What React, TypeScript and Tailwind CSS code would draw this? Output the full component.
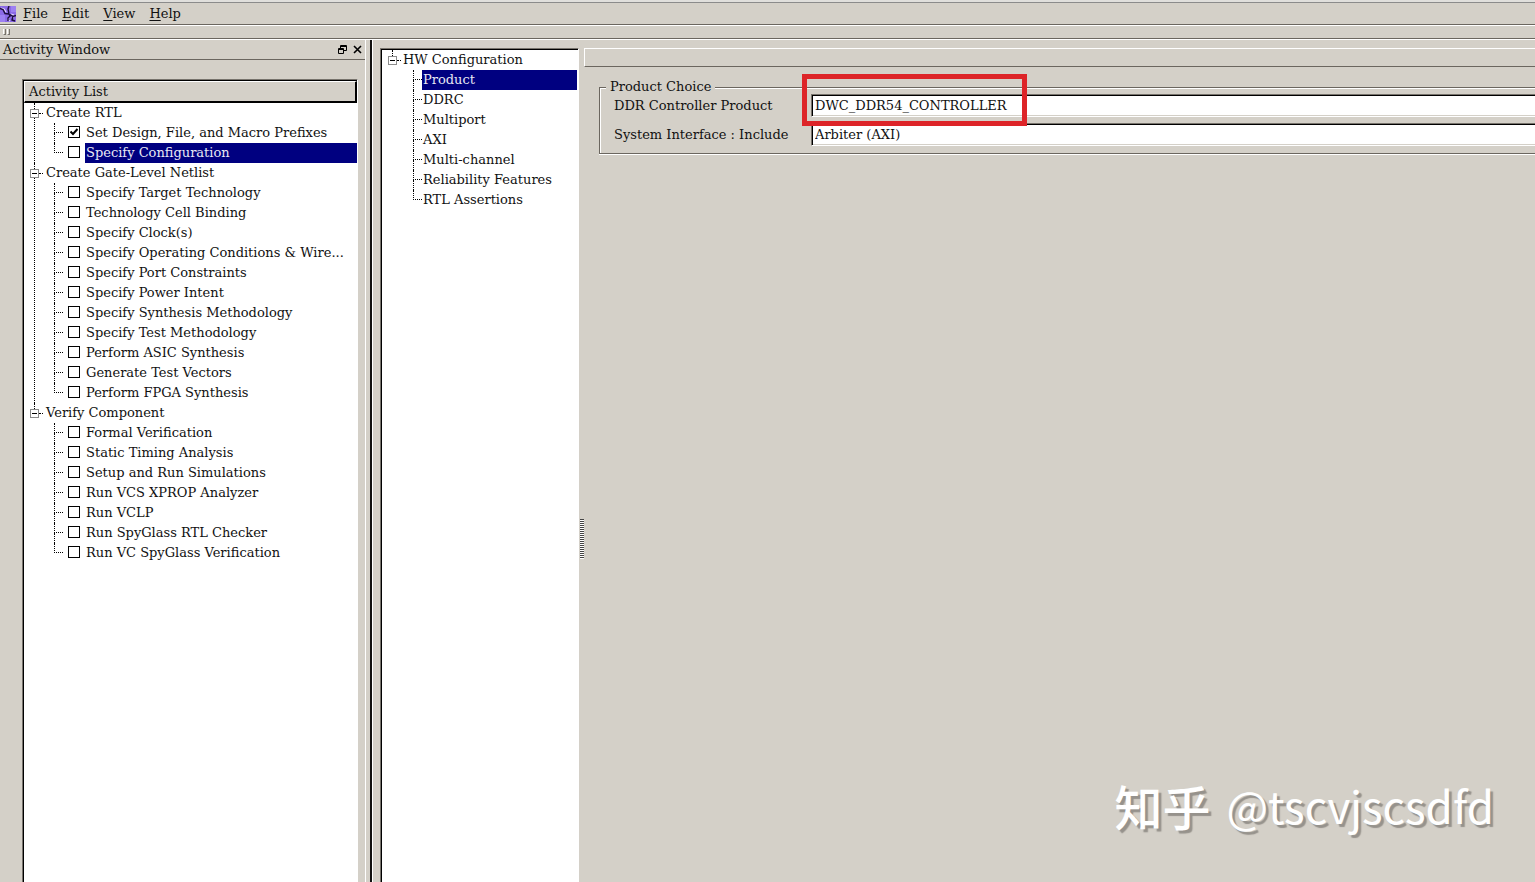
import { useId, useState } from "react";

type Group = { name: string; items: string[] };

const activityGroups: Group[] = [
  { name: "Create RTL", items: ["Set Design, File, and Macro Prefixes", "Specify Configuration"] },
  {
    name: "Create Gate-Level Netlist",
    items: [
      "Specify Target Technology",
      "Technology Cell Binding",
      "Specify Clock(s)",
      "Specify Operating Conditions & Wire...",
      "Specify Port Constraints",
      "Specify Power Intent",
      "Specify Synthesis Methodology",
      "Specify Test Methodology",
      "Perform ASIC Synthesis",
      "Generate Test Vectors",
      "Perform FPGA Synthesis",
    ],
  },
  {
    name: "Verify Component",
    items: [
      "Formal Verification",
      "Static Timing Analysis",
      "Setup and Run Simulations",
      "Run VCS XPROP Analyzer",
      "Run VCLP",
      "Run SpyGlass RTL Checker",
      "Run VC SpyGlass Verification",
    ],
  },
];

const configPages = [
  "Product",
  "DDRC",
  "Multiport",
  "AXI",
  "Multi-channel",
  "Reliability Features",
  "RTL Assertions",
];

function AppLogo() {
  return (
    <svg className="h-4 w-4 shrink-0" viewBox="0 0 16 16" aria-hidden="true">
      <rect width="16" height="16" fill="#8b6ae6" />
      <path d="M0 9h5v7H0zM11 0h5v6h-5z" fill="#9d80f2" />
      <path d="M1 2l3 1 2 3M11 8l3 1M9 11l-1 3 2 1M12 12l2-2" fill="none" stroke="#e6dcff" strokeWidth="1.200" />
      <path
        d="M0 2.500l3 1 2 4 4 .5M9 0l-1 3 1 5 1 2-2 2v3M10 8.500l3 2 3-1M13 10l-1 4 3 1"
        fill="none"
        stroke="#1c0c3c"
        strokeWidth="1.400"
      />
    </svg>
  );
}

function MenuBar() {
  return (
    <nav className="flex h-[22px] items-center border-b border-[#6b665f]">
      <AppLogo />
      <div className="flex gap-[14px] pl-[7px]">
        {["File", "Edit", "View", "Help"].map((name) => (
          <button key={name} type="button" className="leading-5">
            <span className="underline underline-offset-2">{name[0]}</span>
            {name.slice(1)}
          </button>
        ))}
      </div>
    </nav>
  );
}

function Expander({ open, name, onToggle }: { open: boolean; name: string; onToggle: () => void }) {
  return (
    <button
      type="button"
      aria-expanded={open}
      aria-label={name}
      onClick={onToggle}
      className="grid h-[9px] w-[9px] shrink-0 place-items-center border border-[#8c8c8c] bg-white"
    >
      <svg className="h-[5px] w-[5px]" viewBox="0 0 5 5" aria-hidden="true">
        <path d={open ? "M0 2h5v1H0z" : "M0 2h5v1H0zM2 0h1v5H2z"} fill="#000" />
      </svg>
    </button>
  );
}

/* Dotted elbow that joins a child row to its parent. */
function Branch({ last }: { last: boolean }) {
  return (
    <span className="flex h-5 w-[9px] shrink-0 flex-col" aria-hidden="true">
      <span className="h-[10px] border-b border-l border-dotted border-black" />
      {!last && <span className="h-[10px] border-l border-dotted border-black" />}
    </span>
  );
}

function ActivityItem({
  name,
  last,
  selected,
  done,
}: {
  name: string;
  last: boolean;
  selected: boolean;
  done: boolean;
}) {
  const id = useId();
  return (
    <li className="flex h-5">
      <Branch last={last} />
      <span className="ml-[5px] grid h-[18px] w-3 shrink-0 place-items-center">
        <input
          id={id}
          type="checkbox"
          defaultChecked={done}
          className="peer col-start-1 row-start-1 h-3 w-3 appearance-none border border-black bg-white"
        />
        <svg
          className="pointer-events-none col-start-1 row-start-1 hidden h-2 w-2 peer-checked:block"
          viewBox="0 0 8 8"
          aria-hidden="true"
        >
          <path d="M0.500 3.500L3 6 7.500 1" fill="none" stroke="#000" strokeWidth="2" />
        </svg>
      </span>
      <label
        htmlFor={id}
        className={
          selected
            ? "ml-[5px] flex-1 truncate bg-[#000080] pl-px leading-5 text-[#e8e8f4]"
            : "ml-[5px] flex-1 truncate pl-px leading-5"
        }
      >
        {name}
      </label>
    </li>
  );
}

function ActivityGroup({ group, last }: { group: Group; last: boolean }) {
  const [open, setOpen] = useState(true);
  return (
    <li className="flex">
      <div className="flex w-[9px] shrink-0 flex-col items-center">
        <span className="h-[6px] border-l border-dotted border-black" />
        <Expander open={open} name={group.name} onToggle={() => setOpen(!open)} />
        {!last && <span className="flex-1 border-l border-dotted border-black" />}
      </div>
      <div className="min-w-0 flex-1">
        <div className="flex h-5 items-center">
          <span className="mr-[3px] w-1 border-t border-dotted border-black" />
          <span className="leading-5">{group.name}</span>
        </div>
        {open && (
          <ul className="pl-[15px]">
            {group.items.map((item, i) => (
              <ActivityItem
                key={item}
                name={item}
                last={i === group.items.length - 1}
                selected={item === "Specify Configuration"}
                done={item === "Set Design, File, and Macro Prefixes"}
              />
            ))}
          </ul>
        )}
      </div>
    </li>
  );
}

function ActivityWindow() {
  return (
    <aside className="flex w-[366px] shrink-0 flex-col border-r border-white">
      <header className="flex h-5 shrink-0 items-center justify-between border-b border-[#6b665f] px-[3px]">
        <h2>Activity Window</h2>
        <div className="flex gap-[6px]">
          <button type="button" aria-label="Float window">
            <svg className="h-[9px] w-[9px]" viewBox="0 0 9 9" aria-hidden="true">
              <path
                d="M2.500 3V0.500H8.500V5.500H6M2 1.500H9M0.500 3.500H5.500V8.500H0.500ZM0 4.500H6"
                fill="none"
                stroke="#000"
              />
            </svg>
          </button>
          <button type="button" aria-label="Close window">
            <svg className="h-[9px] w-[9px]" viewBox="0 0 9 9" aria-hidden="true">
              <path d="M1 1l7 7M8 1l-7 7" stroke="#000" strokeWidth="1.600" />
            </svg>
          </button>
        </div>
      </header>
      <div className="mt-[19px] mr-[7px] ml-[22px] flex flex-1 flex-col border-t border-r border-l border-t-[#77736c] border-r-white border-l-[#77736c] bg-white pt-px pl-px shadow-[inset_1px_1px_0_#000]">
        <h3 className="h-[22px] shrink-0 border-t border-r-2 border-b-2 border-l border-t-white border-r-black border-b-black border-l-white bg-[#d4d0c8] pl-1 leading-5">
          Activity List
        </h3>
        <ul className="pl-[6px]">
          {activityGroups.map((group, i) => (
            <ActivityGroup key={group.name} group={group} last={i === activityGroups.length - 1} />
          ))}
        </ul>
      </div>
    </aside>
  );
}

function ConfigTree() {
  const [open, setOpen] = useState(true);
  const [page, setPage] = useState("Product");
  return (
    <div className="mt-2 w-[199px] shrink-0 border-t border-r border-l border-t-[#77736c] border-r-white border-l-[#77736c] bg-white pt-px pr-px pl-[7px] shadow-[inset_1px_1px_0_#000]">
      <div className="flex h-5">
        <div className="flex w-[9px] flex-col items-center">
          <span className="h-[6px] border-l border-dotted border-black" />
          <Expander open={open} name="HW Configuration" onToggle={() => setOpen(!open)} />
        </div>
        <div className="flex items-center">
          <span className="mr-[2px] w-1 border-t border-dotted border-black" />
          <span className="leading-5">HW Configuration</span>
        </div>
      </div>
      {open && (
        <ul className="pl-[25px]">
          {configPages.map((name, i) => (
            <li key={name} className="flex h-5">
              <Branch last={i === configPages.length - 1} />
              <button
                type="button"
                onClick={() => setPage(name)}
                className={
                  name === page
                    ? "flex-1 bg-[#000080] pl-px text-left leading-5 text-[#e8e8f4]"
                    : "flex-1 pl-px text-left leading-5"
                }
              >
                {name}
              </button>
            </li>
          ))}
        </ul>
      )}
    </div>
  );
}

function Field({ label, value }: { label: string; value: string }) {
  const id = useId();
  return (
    <div className="flex h-[23px] items-center">
      <label htmlFor={id} className="w-[197px] shrink-0">
        {label}
      </label>
      <select
        id={id}
        defaultValue={value}
        className="h-[23px] min-w-0 flex-1 appearance-none border-t border-b border-l border-t-[#77736c] border-b-white border-l-[#77736c] bg-white pl-[3px] shadow-[inset_1px_1px_0_#000,inset_0_-1px_0_#d4d0c8] outline-none"
      >
        <option>{value}</option>
      </select>
    </div>
  );
}

function ProductPanel() {
  return (
    <section className="min-w-0 flex-1 overflow-hidden pt-2">
      <div className="h-[19px] border-t border-b border-l border-t-white border-b-[#6b665f] border-l-white" />
      <div className="relative mt-[13px] ml-[15px]">
        <fieldset className="h-[74px] border-t border-b border-l border-[#6b665f] shadow-[inset_1px_1px_0_#fff,0_1px_0_#fff]">
          <legend className="ml-[6px] h-[14px] bg-[#d4d0c8] px-1 leading-[13px]">Product Choice</legend>
          <div className="flex flex-col gap-[6px] pl-[14px]">
            <Field label="DDR Controller Product" value="DWC_DDR54_CONTROLLER" />
            <Field label="System Interface : Include" value="Arbiter (AXI)" />
          </div>
        </fieldset>
        <div className="pointer-events-none absolute -top-[6px] left-[203px] h-[52px] w-[225px] border-[5px] border-[#dd2428]" />
      </div>
    </section>
  );
}

export default function App() {
  return (
    <div className="relative flex h-screen flex-col overflow-hidden bg-[#d4d0c8] font-['DejaVu_Serif',serif] text-[13px] leading-5 text-[#111]">
      <div className="h-[3px] shrink-0 border-b border-[#8b8b8b] bg-[#e0dfdc]" />
      <MenuBar />
      <div className="flex h-[14px] shrink-0 items-center gap-px border-t border-b border-t-white border-b-[#6b665f] pl-[3px]">
        <span className="h-[6px] w-[3px] border-r border-b border-l border-r-[#77736c] border-b-[#77736c] border-l-white" />
        <span className="h-[6px] w-[3px] border-r border-b border-l border-r-[#77736c] border-b-[#77736c] border-l-white" />
      </div>
      <main className="flex min-h-0 flex-1 border-t border-white">
        <ActivityWindow />
        <div className="flex min-w-0 flex-1 pl-1">
          <div className="flex min-w-0 flex-1 border-l-2 border-[#111]">
            <div className="w-2 shrink-0 border-l border-white" />
            <ConfigTree />
            <div className="flex w-[5px] shrink-0 items-center justify-end pb-[155px]" aria-hidden="true">
              <span className="mt-[311px] h-10 w-1 bg-[repeating-linear-gradient(to_bottom,#444_0px,#444_1px,#fff_1px,#fff_2px)]" />
            </div>
            <ProductPanel />
          </div>
        </div>
      </main>
      <p className="pointer-events-none absolute right-[41px] bottom-[44px] flex items-center gap-4 font-['Noto_Sans_CJK_SC',sans-serif] text-[44px] leading-[66px] text-white [text-shadow:3px_3px_1px_#96928c]">
        <span className="text-[48px] font-medium">知乎</span>
        <span>@tscvjscsdfd</span>
      </p>
    </div>
  );
}
